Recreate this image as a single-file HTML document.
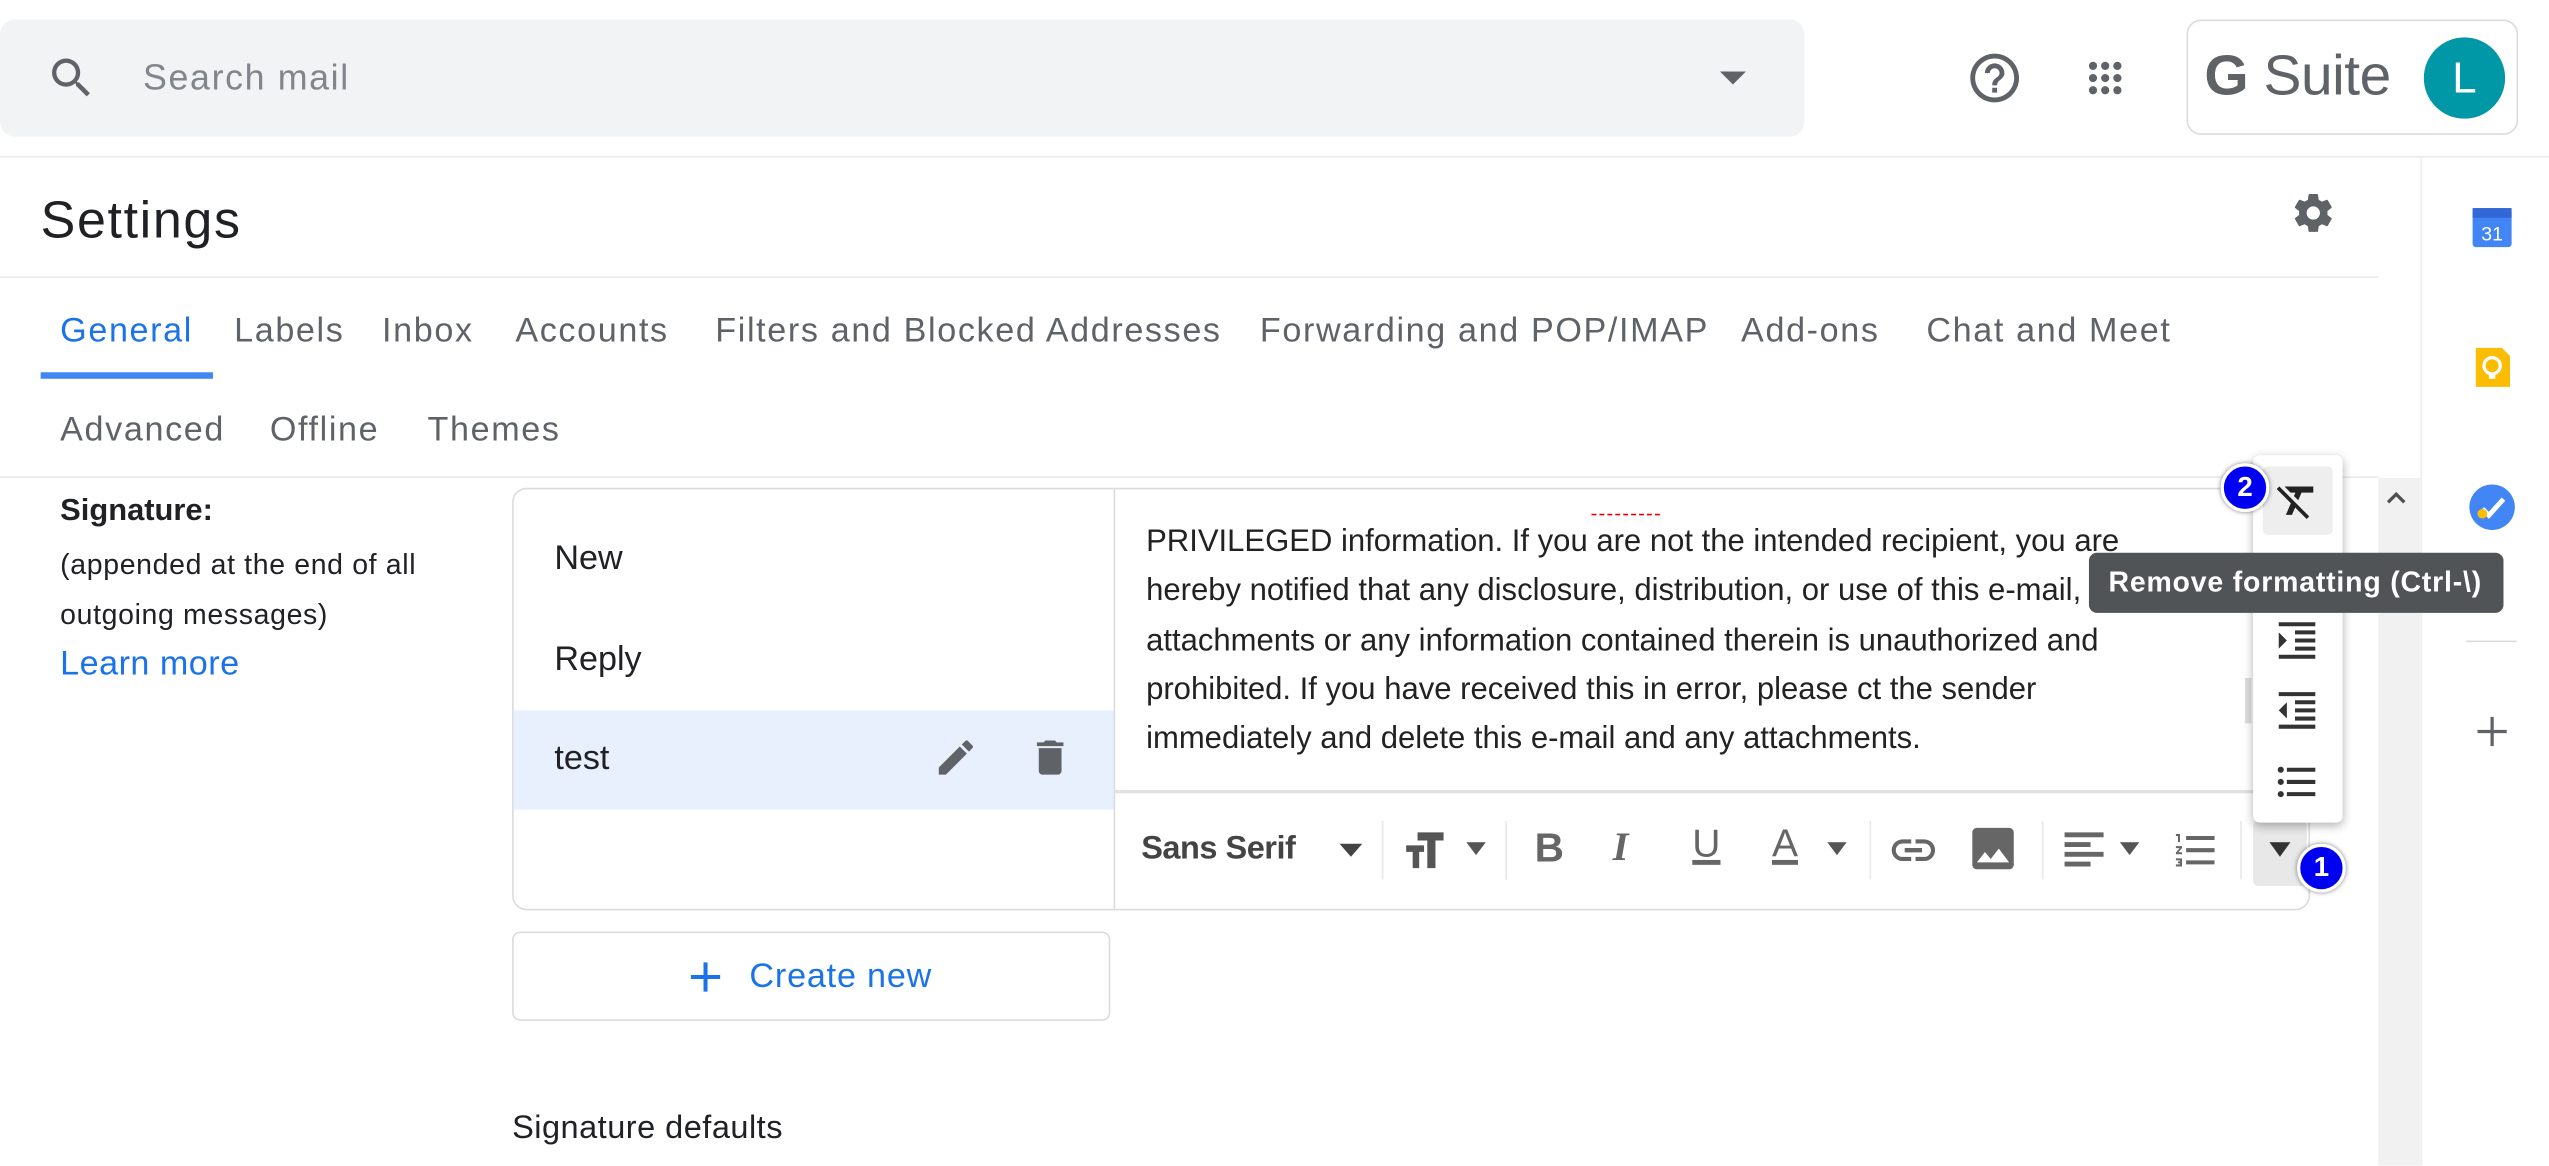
<!DOCTYPE html>
<html><head><meta charset="utf-8"><style>
html,body{margin:0;padding:0;background:#fff;overflow:hidden;width:2549px;height:1165px}
#w{position:absolute;left:0;top:0;width:1568px;height:717px;transform:scale(1.62564);transform-origin:0 0;font-family:"Liberation Sans",Arial,sans-serif;color:#202124}
.a{position:absolute}
.t{position:absolute;white-space:nowrap}
.tab{position:absolute;top:192px;font-size:21px;color:#5f6368;white-space:nowrap;letter-spacing:1px}
.ed{position:absolute;left:705px;font-size:19.1px;color:#222;white-space:nowrap;font-family:"Liberation Sans",Arial,sans-serif}
svg{position:absolute}
</style></head><body><div id="w">
<div class="a" style="left:0;top:12px;width:1110px;height:72px;background:#f1f3f4;border-radius:9px"></div>
<svg style="left:28px;top:32px" width="32" height="32" viewBox="0 0 24 24"><path fill="#5f6368" d="M15.5 14h-.79l-.28-.27A6.470 6.470 0 0 0 16 9.5 6.5 6.5 0 1 0 9.5 16c1.610 0 3.090-.59 4.230-1.570l.27.28v.79l5 4.990L20.490 19l-4.990-5zm-6 0C7.010 14 5 11.990 5 9.5S7.010 5 9.5 5 14 7.010 14 9.5 11.990 14 9.5 14z"/></svg>
<div class="t" style="left:88px;top:35px;font-size:22px;color:#80868b;letter-spacing:1px">Search mail</div>
<svg style="left:1056px;top:42px" width="20" height="12"><path d="M2 2h16L10 10z" fill="#5f6368"/></svg>
<svg style="left:1209px;top:30px" width="36" height="36" viewBox="0 0 24 24"><path fill="#5f6368" d="M11 18h2v-2h-2v2zm1-16C6.480 2 2 6.480 2 12s4.480 10 10 10 10-4.480 10-10S17.520 2 12 2zm0 18c-4.410 0-8-3.590-8-8s3.590-8 8-8 8 3.590 8 8-3.590 8-8 8zm0-14c-2.210 0-4 1.790-4 4h2c0-1.100.9-2 2-2s2 .9 2 2c0 2-3 1.750-3 5h2c0-2.250 3-2.500 3-5 0-2.210-1.790-4-4-4z"/></svg>
<svg style="left:1280px;top:33px" width="30" height="30" viewBox="0 0 24 24"><path fill="#5f6368" d="M6 8c1.1 0 2-.9 2-2s-.9-2-2-2-2 .9-2 2 .9 2 2 2zm6 12c1.1 0 2-.9 2-2s-.9-2-2-2-2 .9-2 2 .9 2 2 2zm-6 0c1.1 0 2-.9 2-2s-.9-2-2-2-2 .9-2 2 .9 2 2 2zm0-6c1.1 0 2-.9 2-2s-.9-2-2-2-2 .9-2 2 .9 2 2 2zm6 0c1.1 0 2-.9 2-2s-.9-2-2-2-2 .9-2 2 .9 2 2 2zm4-8c0 1.1.9 2 2 2s2-.9 2-2-.9-2-2-2-2 .9-2 2zm-4 2c1.1 0 2-.9 2-2s-.9-2-2-2-2 .9-2 2 .9 2 2 2zm6 6c1.1 0 2-.9 2-2s-.9-2-2-2-2 .9-2 2 .9 2 2 2zm0 6c1.1 0 2-.9 2-2s-.9-2-2-2-2 .9-2 2 .9 2 2 2z"/></svg>
<div class="a" style="left:1345px;top:12px;width:204px;height:71px;border:1px solid #dadce0;border-radius:9px;box-sizing:border-box"></div>
<div class="t" style="left:1356px;top:27px;font-size:35px;color:#5f6368;letter-spacing:-0.3px"><b style="font-weight:bold">G</b> Suite</div>
<div class="a" style="left:1491px;top:23px;width:50px;height:50px;border-radius:50%;background:#0097a7;color:#fff;font-size:27px;text-align:center;line-height:50px">L</div>
<div class="a" style="left:0;top:96px;width:1568px;height:1px;background:#e8eaed"></div>
<div class="a" style="left:1489px;top:97px;width:1px;height:620px;background:#eceff1"></div>
<div class="t" style="left:25px;top:117px;font-size:32px;color:#202124;letter-spacing:1px">Settings</div>
<svg style="left:1409px;top:117px" width="28" height="28" viewBox="0 0 24 24"><path fill="#5f6368" d="M19.430 12.980c.04-.32.07-.64.07-.98s-.03-.66-.07-.98l2.110-1.650c.19-.15.24-.42.12-.64l-2-3.460c-.12-.22-.39-.3-.61-.22l-2.490 1c-.52-.4-1.080-.73-1.690-.98l-.38-2.650A.49.49 0 0 0 14 2h-4c-.25 0-.46.18-.49.42l-.38 2.650c-.61.25-1.170.59-1.690.98l-2.490-1c-.23-.09-.49 0-.61.22l-2 3.460c-.13.22-.07.49.12.64l2.110 1.650c-.04.32-.07.65-.07.98s.03.66.07.98l-2.110 1.650c-.19.15-.24.42-.12.64l2 3.460c.12.22.39.3.61.22l2.490-1c.52.4 1.080.73 1.690.98l.38 2.650c.03.24.24.42.49.42h4c.25 0 .46-.18.49-.42l.38-2.650c.61-.25 1.170-.59 1.690-.98l2.490 1c.23.09.49 0 .61-.22l2-3.460c.12-.22.07-.49-.12-.64l-2.110-1.650zM12 15.500c-1.930 0-3.500-1.570-3.500-3.500s1.570-3.500 3.500-3.500 3.500 1.570 3.500 3.500-1.570 3.500-3.500 3.500z"/></svg>
<div class="a" style="left:0;top:170px;width:1463px;height:1px;background:#e8eaed"></div>
<div class="tab" style="left:37px;color:#1a73e8">General</div>
<div class="a" style="left:25px;top:229px;width:106px;height:4px;background:#4285f4"></div>
<div class="tab" style="left:144px">Labels</div>
<div class="tab" style="left:235px">Inbox</div>
<div class="tab" style="left:317px">Accounts</div>
<div class="tab" style="left:440px">Filters and Blocked Addresses</div>
<div class="tab" style="left:775px">Forwarding and POP/IMAP</div>
<div class="tab" style="left:1071px">Add-ons</div>
<div class="tab" style="left:1185px">Chat and Meet</div>
<div class="tab" style="left:37px;top:253px">Advanced</div>
<div class="tab" style="left:166px;top:253px">Offline</div>
<div class="tab" style="left:263px;top:253px">Themes</div>
<div class="a" style="left:0;top:293px;width:1463px;height:1px;background:#e8eaed"></div>
<div class="t" style="left:37px;top:304px;font-size:19px;font-weight:bold">Signature:</div>
<div class="t" style="left:37px;top:337px;font-size:17.5px;color:#202124;letter-spacing:0.4px">(appended at the end of all</div>
<div class="t" style="left:37px;top:368px;font-size:17.5px;color:#202124;letter-spacing:0.4px">outgoing messages)</div>
<div class="t" style="left:37px;top:397px;font-size:21px;color:#1a73e8;letter-spacing:0.3px">Learn more</div>
<div class="a" style="left:315px;top:300px;width:1106px;height:260px;border:1px solid #dadce0;border-radius:9px;box-sizing:border-box;overflow:hidden">
  <div class="a" style="left:0;top:136px;width:370px;height:61px;background:#e8f0fe"></div>
  <div class="a" style="left:369px;top:0;width:1px;height:260px;background:#dadce0"></div>
  <div class="a" style="left:370px;top:185px;width:740px;height:2px;background:#e0e0e0"></div>
</div>
<div class="t" style="left:341px;top:332px;font-size:21px">New</div>
<div class="t" style="left:341px;top:394px;font-size:21px">Reply</div>
<div class="t" style="left:341px;top:455px;font-size:21px">test</div>
<svg style="left:574px;top:452px" width="28" height="28" viewBox="0 0 24 24"><path fill="#5f6368" d="M3 17.250V21h3.750L17.810 9.940l-3.750-3.750L3 17.250zM20.710 7.040a1 1 0 0 0 0-1.410l-2.340-2.340a1 1 0 0 0-1.410 0l-1.830 1.830 3.750 3.750 1.830-1.830z"/></svg>
<svg style="left:632px;top:452px" width="28" height="28" viewBox="0 0 24 24"><path fill="#5f6368" d="M6 19c0 1.1.9 2 2 2h8c1.1 0 2-.9 2-2V7H6v12zM19 4h-3.500l-1-1h-5l-1 1H5v2h14V4z"/></svg>
<div class="a" style="left:979px;top:316px;width:42px;border-top:1.5px dashed #e00"></div>
<div class="ed" style="top:323px">PRIVILEGED information. If you are not the intended recipient, you are</div>
<div class="ed" style="top:353px">hereby notified that any disclosure, distribution, or use of this e-mail, its</div>
<div class="ed" style="top:384px">attachments or any information contained therein is unauthorized and</div>
<div class="ed" style="top:414px">prohibited. If you have received this in error, please ct the sender</div>
<div class="ed" style="top:444px">immediately and delete this e-mail and any attachments.</div>
<div class="a" style="left:1381px;top:417px;width:4px;height:28px;background:#ddd"></div>
<div class="t" style="left:702px;top:511px;font-size:20px;color:#444;font-weight:bold;letter-spacing:-0.3px">Sans Serif</div>
<svg style="left:823px;top:518px" width="16" height="10"><path d="M1 1h14L8 9z" fill="#444"/></svg>
<div class="a" style="left:850px;top:505px;width:1px;height:36px;background:#e8e8e8"></div>
<svg style="left:864px;top:510px" width="28" height="26" viewBox="0 0 28 26"><path fill="#555" d="M8 2h16v5h-5v17h-5V7H8zM1 10h11v4H9v10H5V14H1z"/></svg>
<svg style="left:902px;top:518px" width="12" height="8"><path d="M0 0h12L6 8z" fill="#555"/></svg>
<div class="a" style="left:926px;top:505px;width:1px;height:36px;background:#e8e8e8"></div>
<div class="t" style="left:944px;top:508px;font-size:25px;font-weight:bold;color:#666">B</div>
<div class="t" style="left:992px;top:508px;font-size:25px;font-weight:bold;font-style:italic;color:#666;font-family:'Liberation Serif',serif">I</div>
<div class="t" style="left:1041px;top:506px;font-size:24px;color:#666;text-decoration:underline;text-decoration-thickness:3px">U</div>
<div class="t" style="left:1090px;top:506px;font-size:24px;color:#666;text-decoration:underline;text-decoration-thickness:3px">A</div>
<svg style="left:1124px;top:518px" width="12" height="8"><path d="M0 0h12L6 8z" fill="#555"/></svg>
<div class="a" style="left:1150px;top:505px;width:1px;height:36px;background:#e8e8e8"></div>
<svg style="left:1161px;top:507px" width="32" height="32" viewBox="0 0 24 24"><path fill="#666" d="M3.900 12c0-1.710 1.390-3.100 3.100-3.100h4V7H7a5 5 0 0 0 0 10h4v-1.900H7c-1.710 0-3.100-1.390-3.100-3.100zM8 13h8v-2H8v2zm9-6h-4v1.900h4c1.710 0 3.100 1.390 3.100 3.100s-1.390 3.100-3.100 3.100h-4V17h4a5 5 0 0 0 0-10z"/></svg>
<svg style="left:1209px;top:505px" width="34" height="34" viewBox="0 0 24 24"><path fill="#666" d="M21 19V5c0-1.100-.9-2-2-2H5c-1.100 0-2 .9-2 2v14c0 1.100.9 2 2 2h14c1.100 0 2-.9 2-2zM8.500 13.500l2.500 3.010L14.500 12l4.500 6H5l3.500-4.500z"/></svg>
<div class="a" style="left:1256px;top:505px;width:1px;height:36px;background:#e8e8e8"></div>
<svg style="left:1268px;top:510px" width="28" height="26" viewBox="0 0 28 26"><path fill="#666" d="M2 2h24v3H2zM2 8h16v3H2zM2 14h24v3H2zM2 20h16v3H2z"/></svg>
<svg style="left:1304px;top:518px" width="12" height="8"><path d="M0 0h12L6 8z" fill="#555"/></svg>
<svg style="left:1336px;top:508px" width="30" height="30" viewBox="0 0 24 24"><path fill="#666" d="M2 17h2v.5H3v1h1v.5H2v1h3v-4H2v1zm1-9h1V4H2v1h1v3zm-1 3h1.800L2 13.100v.9h3v-1H3.200L5 10.900V10H2v1zm5-6v2h14V5H7zm0 14h14v-2H7v2zm0-6h14v-2H7v2z"/></svg>
<div class="a" style="left:1378px;top:505px;width:1px;height:36px;background:#e8e8e8"></div>
<div class="a" style="left:1386px;top:505px;width:33px;height:40px;background:#e8e8e8;border-radius:3px"></div>
<svg style="left:1396px;top:518px" width="13" height="9"><path d="M0 0h13L6.500 9z" fill="#333"/></svg>
<div class="a" style="left:1463px;top:294px;width:26px;height:423px;background:#f1f1f1"></div>
<svg style="left:1467px;top:300px" width="14" height="12"><path d="M2 9l5-5 5 5" stroke="#505050" stroke-width="2" fill="none"/></svg>
<div class="a" style="left:1386px;top:280px;width:55px;height:226px;background:#fff;border-radius:4px;box-shadow:0 2px 6px rgba(0,0,0,.3)"></div>
<div class="a" style="left:1392px;top:287px;width:43px;height:42px;background:#eee;border-radius:3px"></div>
<svg style="left:1398px;top:293px" width="30" height="30" viewBox="0 0 24 24"><path fill="#222" d="M3.270 5L2 6.270l6.970 6.970L6.500 19h3l1.570-3.660L16.730 21 18 19.730 3.550 5.270 3.270 5zM6 5v.18L8.820 8h2.400l-.72 1.680 2.100 2.100L14.210 8H20V5H6z"/></svg>
<svg style="left:1398px;top:379px" width="30" height="30" viewBox="0 0 24 24"><path fill="#333" d="M3 21h18v-2H3v2zM3 8v8l4-4-4-4zm8 9h10v-2H11v2zM3 3v2h18V3H3zm8 6h10V7H11v2zm0 4h10v-2H11v2z"/></svg>
<svg style="left:1398px;top:422px" width="30" height="30" viewBox="0 0 24 24"><path fill="#333" d="M11 17h10v-2H11v2zm-8-5l4 4V8l-4 4zm0 9h18v-2H3v2zM3 3v2h18V3H3zm8 6h10V7H11v2zm0 4h10v-2H11v2z"/></svg>
<svg style="left:1398px;top:466px" width="30" height="30" viewBox="0 0 24 24"><path fill="#333" d="M4 10.500c-.83 0-1.500.67-1.500 1.500s.67 1.500 1.500 1.500 1.500-.67 1.500-1.500-.67-1.500-1.500-1.500zm0-6c-.83 0-1.500.67-1.500 1.500S3.170 7.500 4 7.500 5.500 6.830 5.500 6 4.830 4.500 4 4.500zm0 12c-.83 0-1.500.68-1.500 1.500s.68 1.500 1.500 1.500 1.500-.68 1.500-1.500-.67-1.500-1.500-1.500zM7 19h14v-2H7v2zm0-6h14v-2H7v2zm0-8v2h14V5H7z"/></svg>
<div class="a" style="left:315px;top:573px;width:368px;height:55px;border:1px solid #dadce0;border-radius:5px;box-sizing:border-box"></div>
<svg style="left:423px;top:590px" width="22" height="22"><path d="M11 2v18M2 11h18" stroke="#1a73e8" stroke-width="2.5"/></svg>
<div class="t" style="left:461px;top:589px;font-size:21px;color:#1a73e8;letter-spacing:0.5px">Create new</div>
<div class="t" style="left:315px;top:683px;font-size:20px;color:#202124;letter-spacing:0.3px">Signature defaults</div>
<svg style="left:1519px;top:126px" width="28" height="28" viewBox="0 0 28 28"><rect x="2" y="2" width="24" height="24" rx="2" fill="#4285f4"/><rect x="2" y="2" width="24" height="6" fill="#3367d6"/><text x="14" y="22" font-size="12" fill="#fff" text-anchor="middle" font-family="Liberation Sans">31</text></svg>
<svg style="left:1519px;top:212px" width="28" height="28" viewBox="0 0 28 28"><path d="M4 2h16l5 5v19H4z" fill="#fbbc04"/><circle cx="14" cy="13" r="5" fill="none" stroke="#fff" stroke-width="2"/><rect x="12" y="18" width="4" height="3" fill="#fff"/></svg>
<svg style="left:1518px;top:297px" width="30" height="30" viewBox="0 0 30 30"><circle cx="15" cy="15" r="14" fill="#4285f4"/><path d="M9 16l4 4 9-10" stroke="#fff" stroke-width="3" fill="none"/><circle cx="9" cy="19" r="3" fill="#fbbc04"/></svg>
<div class="a" style="left:1517px;top:394px;width:31px;height:1px;background:#dadce0"></div>
<svg style="left:1521px;top:438px" width="24" height="24"><path d="M12 3v18M3 12h18" stroke="#5f6368" stroke-width="2"/></svg>
<div class="a" style="left:1285px;top:340px;width:255px;height:37px;background:#505457;border-radius:5px;z-index:10"></div>
<div class="t" style="left:1297px;top:348px;font-size:17.5px;letter-spacing:0.5px;font-weight:bold;color:#fff;z-index:11">Remove formatting (Ctrl-\)</div>
<div class="a" style="left:1366px;top:285px;width:26px;height:26px;border-radius:50%;background:#0000f0;border:2px solid #fff;box-shadow:0 0 3px rgba(0,0,0,.5);color:#fff;font-weight:bold;font-size:17px;text-align:center;line-height:26px;z-index:12">2</div>
<div class="a" style="left:1413px;top:519px;width:26px;height:26px;border-radius:50%;background:#0000f0;border:2px solid #fff;box-shadow:0 0 3px rgba(0,0,0,.5);color:#fff;font-weight:bold;font-size:17px;text-align:center;line-height:26px;z-index:12">1</div>
</div></body></html>
